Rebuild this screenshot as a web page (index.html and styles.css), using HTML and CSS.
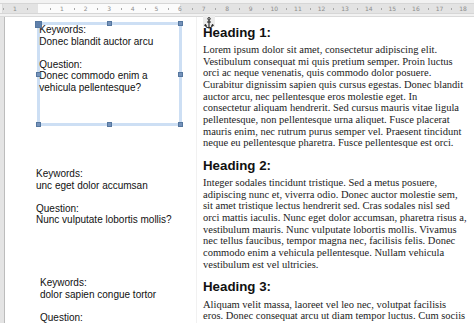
FILE: index.html
```html
<!DOCTYPE html>
<html lang="en">
<head>
    <meta charset="UTF-8">
    <meta name="viewport" content="width=device-width, initial-scale=1.0">
    <title>Document - Notes</title>
    <link rel="stylesheet" href="styles.css">
</head>
<body>
    <div class="ruler">
        <div class="ruler-bar">
            <span class="cm">1</span>
            <span class="cm"></span>
            <span class="cm">1</span>
            <span class="cm">2</span>
            <span class="cm">3</span>
            <span class="cm">4</span>
            <span class="cm">5</span>
            <span class="cm">6</span>
            <span class="cm">7</span>
            <span class="cm">8</span>
            <span class="cm">9</span>
            <span class="cm">10</span>
            <span class="cm">11</span>
            <span class="cm">12</span>
            <span class="cm">13</span>
            <span class="cm">14</span>
            <span class="cm">15</span>
            <span class="cm">16</span>
            <span class="cm">17</span>
            <span class="cm">18</span>
        </div>
    </div>

    <div class="page">
        <aside class="notes">
            <div class="frame">
                <p class="note">Keywords:<br>Donec blandit auctor arcu<br><br>Question:<br>Donec commodo enim a<br>vehicula pellentesque?</p>
                <span class="handle handle-tl"></span>
                <span class="handle handle-tm"></span>
                <span class="handle handle-tr"></span>
                <span class="handle handle-ml"></span>
                <span class="handle handle-mr"></span>
                <span class="handle handle-bl"></span>
                <span class="handle handle-bm"></span>
                <span class="handle handle-br"></span>
            </div>

            <p class="note note-second">Keywords:<br>unc eget dolor accumsan<br><br>Question:<br>Nunc vulputate lobortis mollis?</p>

            <p class="note note-third">Keywords:<br>dolor sapien congue tortor<br><br>Question:</p>
        </aside>

        <main class="text">
            <span class="anchor">
                <svg width="10" height="12" viewBox="0 0 10 12">
                    <circle cx="5" cy="1.8" r="1.2" fill="none" stroke="#222" stroke-width="1"/>
                    <path d="M5 3v8M3 5h4M1.4 7.8Q1.8 10.8 5 11Q8.2 10.8 8.6 7.8" fill="none" stroke="#222" stroke-width="1.1"/>
                    <path d="M0.4 8.8L1.4 7.2L2.5 8.6M7.5 8.6L8.6 7.2L9.6 8.8" fill="none" stroke="#222" stroke-width="0.9"/>
                </svg>
            </span>

            <h2>Heading 1:</h2>
            <p>Lorem ipsum dolor sit amet, consectetur adipiscing elit.<br>Vestibulum consequat mi quis pretium semper. Proin luctus<br>orci ac neque venenatis, quis commodo dolor posuere.<br>Curabitur dignissim sapien quis cursus egestas. Donec blandit<br>auctor arcu, nec pellentesque eros molestie eget. In<br>consectetur aliquam hendrerit. Sed cursus mauris vitae ligula<br>pellentesque, non pellentesque urna aliquet. Fusce placerat<br>mauris enim, nec rutrum purus semper vel. Praesent tincidunt<br>neque eu pellentesque pharetra. Fusce pellentesque est orci.</p>

            <h2>Heading 2:</h2>
            <p>Integer sodales tincidunt tristique. Sed a metus posuere,<br>adipiscing nunc et, viverra odio. Donec auctor molestie sem,<br>sit amet tristique lectus hendrerit sed. Cras sodales nisl sed<br>orci mattis iaculis. Nunc eget dolor accumsan, pharetra risus a,<br>vestibulum mauris. Nunc vulputate lobortis mollis. Vivamus<br>nec tellus faucibus, tempor magna nec, facilisis felis. Donec<br>commodo enim a vehicula pellentesque. Nullam vehicula<br>vestibulum est vel ultricies.</p>

            <h2>Heading 3:</h2>
            <p>Aliquam velit massa, laoreet vel leo nec, volutpat facilisis<br>eros. Donec consequat arcu ut diam tempor luctus. Cum sociis</p>
        </main>
    </div>
</body>
</html>
```

FILE: styles.css
```css
* {
    margin: 0;
    padding: 0;
    box-sizing: border-box;
}

body {
    background: #e4e4e4;
    color: #111;
    height: 323px;
    overflow: hidden;
}

/* ruler */

.ruler {
    height: 17px;
    padding-top: 3px;
    background: #f2f2f2;
    border-bottom: 1px solid #dadada;
}

.ruler-bar {
    display: flex;
    height: 11px;
    padding-left: 3px;
    background: linear-gradient(to right,
        #f2f2f2 2px, #dcdcdc 2px, #dcdcdc 3px, #e3e3e3 3px,
        #e3e3e3 38px, #fbfbfb 38px, #fbfbfb 180px, #e3e3e3 180px);
    border-top: 1px solid #d6d6d6;
    border-bottom: 1px solid #d6d6d6;
}

.cm {
    flex: 0 0 23.6px;
    font-family: "DejaVu Sans", sans-serif;
    font-size: 6px;
    line-height: 9px;
    text-align: center;
    color: #8c8c8c;
    background: linear-gradient(#a8a8a8, #a8a8a8) no-repeat left center / 1px 2px;
}

/* page */

.page {
    display: grid;
    grid-template-columns: 192px 1fr;
    height: 306px;
    margin-left: 4px;
    background: #fff;
    border-left: 1px solid #bcbcbc;
}

.notes {
    padding-top: 5px;
    border-right: 1px solid #f1f1f1;
}

.note {
    font-family: "Liberation Sans", Arial, sans-serif;
    font-size: 10px;
    line-height: 11.5px;
    color: #111;
    white-space: nowrap;
}

.frame {
    position: relative;
    width: 145px;
    height: 104px;
    margin-left: 32px;
    padding: 2.4px 0 0 2.3px;
    box-shadow: inset 0 0 0 3px #cddff4;
}

.note-second {
    margin: 42.4px 0 0 31px;
}

.note-third {
    margin: 51.5px 0 0 35px;
}

.handle {
    position: absolute;
    width: 5px;
    height: 5px;
    background: #7592ba;
    border: 1px solid #55779f;
}

.handle-tl {
    left: -2px;
    top: -1.5px;
    width: 7px;
    height: 7px;
    background: #5f80ab;
}

.handle-tm { left: 70px; top: -1px; }
.handle-tr { left: 141px; top: -1px; }
.handle-ml { left: -1px; top: 50px; }
.handle-mr { left: 141px; top: 50px; }
.handle-bl { left: -1px; top: 100px; }
.handle-bm { left: 70px; top: 100px; }
.handle-br { left: 141px; top: 100px; }

/* body text */

.text {
    position: relative;
    padding: 7.7px 0 0 6px;
    color: #1c1c1c;
}

.anchor {
    position: absolute;
    left: 6px;
    top: -2px;
    width: 12px;
    height: 12px;
    padding: 0 1px;
    background: #ececec;
}

.text h2 {
    font-family: "Liberation Sans", Arial, sans-serif;
    font-size: 13.3px;
    font-weight: bold;
    line-height: 15.3px;
    color: #111;
    margin: 8.9px 0 4px;
}

.text h2:first-of-type {
    margin-top: 0;
}

.text p {
    font-family: "Liberation Serif", "Times New Roman", serif;
    font-size: 10.5px;
    line-height: 11.65px;
    white-space: nowrap;
}
```
